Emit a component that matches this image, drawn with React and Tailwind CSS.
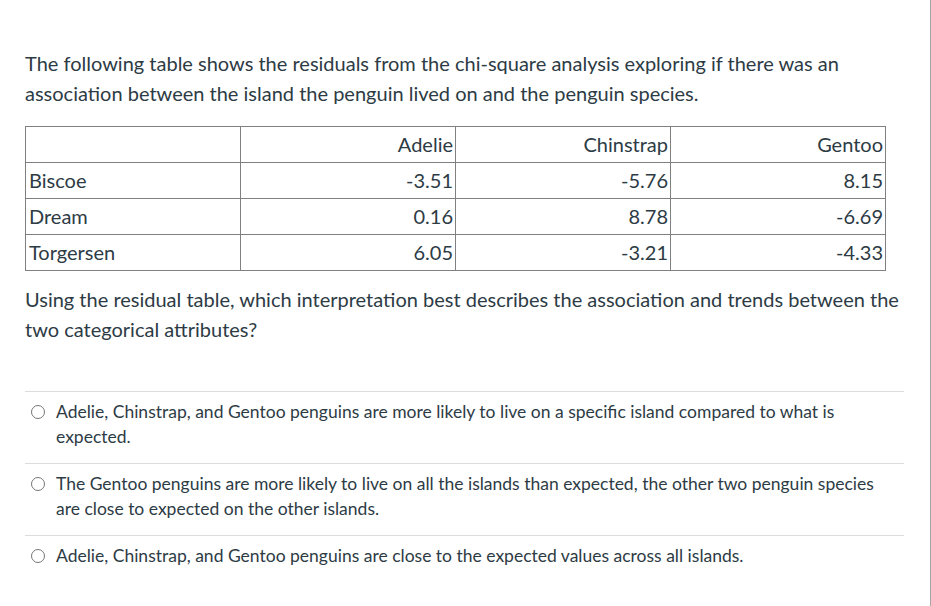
export default function App() {
  const rows = [
    ["Biscoe", "-3.51", "-5.76", "8.15"],
    ["Dream", "0.16", "8.78", "-6.69"],
    ["Torgersen", "6.05", "-3.21", "-4.33"],
  ];
  const answers = [
    "Adelie, Chinstrap, and Gentoo penguins are more likely to live on a specific island compared to what is expected.",
    "The Gentoo penguins are more likely to live on all the islands than expected, the other two penguin species are close to expected on the other islands.",
    "Adelie, Chinstrap, and Gentoo penguins are close to the expected values across all islands.",
  ];
  const cell = "border border-[#808080] h-9 pl-[3px] pr-[2px] pt-0 pb-[2px]";
  return (
    <div
      className="w-[931px] h-[606px] bg-white text-[#2d3b45] border-r border-[#a6a6a6] overflow-hidden"
      style={{ fontFamily: "Lato, 'Liberation Sans', sans-serif" }}
    >
      <div className="pl-[25px] pr-[26px] pt-[48px]">
        <p className="text-[20px] leading-[30px]">
          The following table shows the residuals from the chi-square analysis exploring if there was an association between the island the penguin lived on and the penguin species.
        </p>
        <table className="mt-[18px] border-collapse w-[861px] text-[20px] table-fixed">
          <tbody>
            <tr>
              <td className={cell}></td>
              <td className={cell + " text-right"}>Adelie</td>
              <td className={cell + " text-right"}>Chinstrap</td>
              <td className={cell + " text-right"}>Gentoo</td>
            </tr>
            {rows.map((r) => (
              <tr key={r[0]}>
                <td className={cell}>{r[0]}</td>
                <td className={cell + " text-right"}>{r[1]}</td>
                <td className={cell + " text-right"}>{r[2]}</td>
                <td className={cell + " text-right"}>{r[3]}</td>
              </tr>
            ))}
          </tbody>
        </table>
        <p className="mt-[13px] text-[20px] leading-[30px]">
          Using the residual table, which interpretation best describes the association and trends between the two categorical attributes?
        </p>
        <div className="mt-[47px] w-[879px]">
          {answers.map((a, i) => (
            <div key={i} className="border-t border-[#dcdcdc] flex items-start pt-[7px] pb-[14px]">
              <div className="w-[31px] shrink-0 flex pl-[6px] pt-[5.5px]">
                <span className="w-[14px] h-[14px] rounded-full border border-[#767676] bg-white"></span>
              </div>
              <div className="text-[17.5px] leading-[25px] pr-[10px]">{a}</div>
            </div>
          ))}
        </div>
      </div>
    </div>
  );
}
